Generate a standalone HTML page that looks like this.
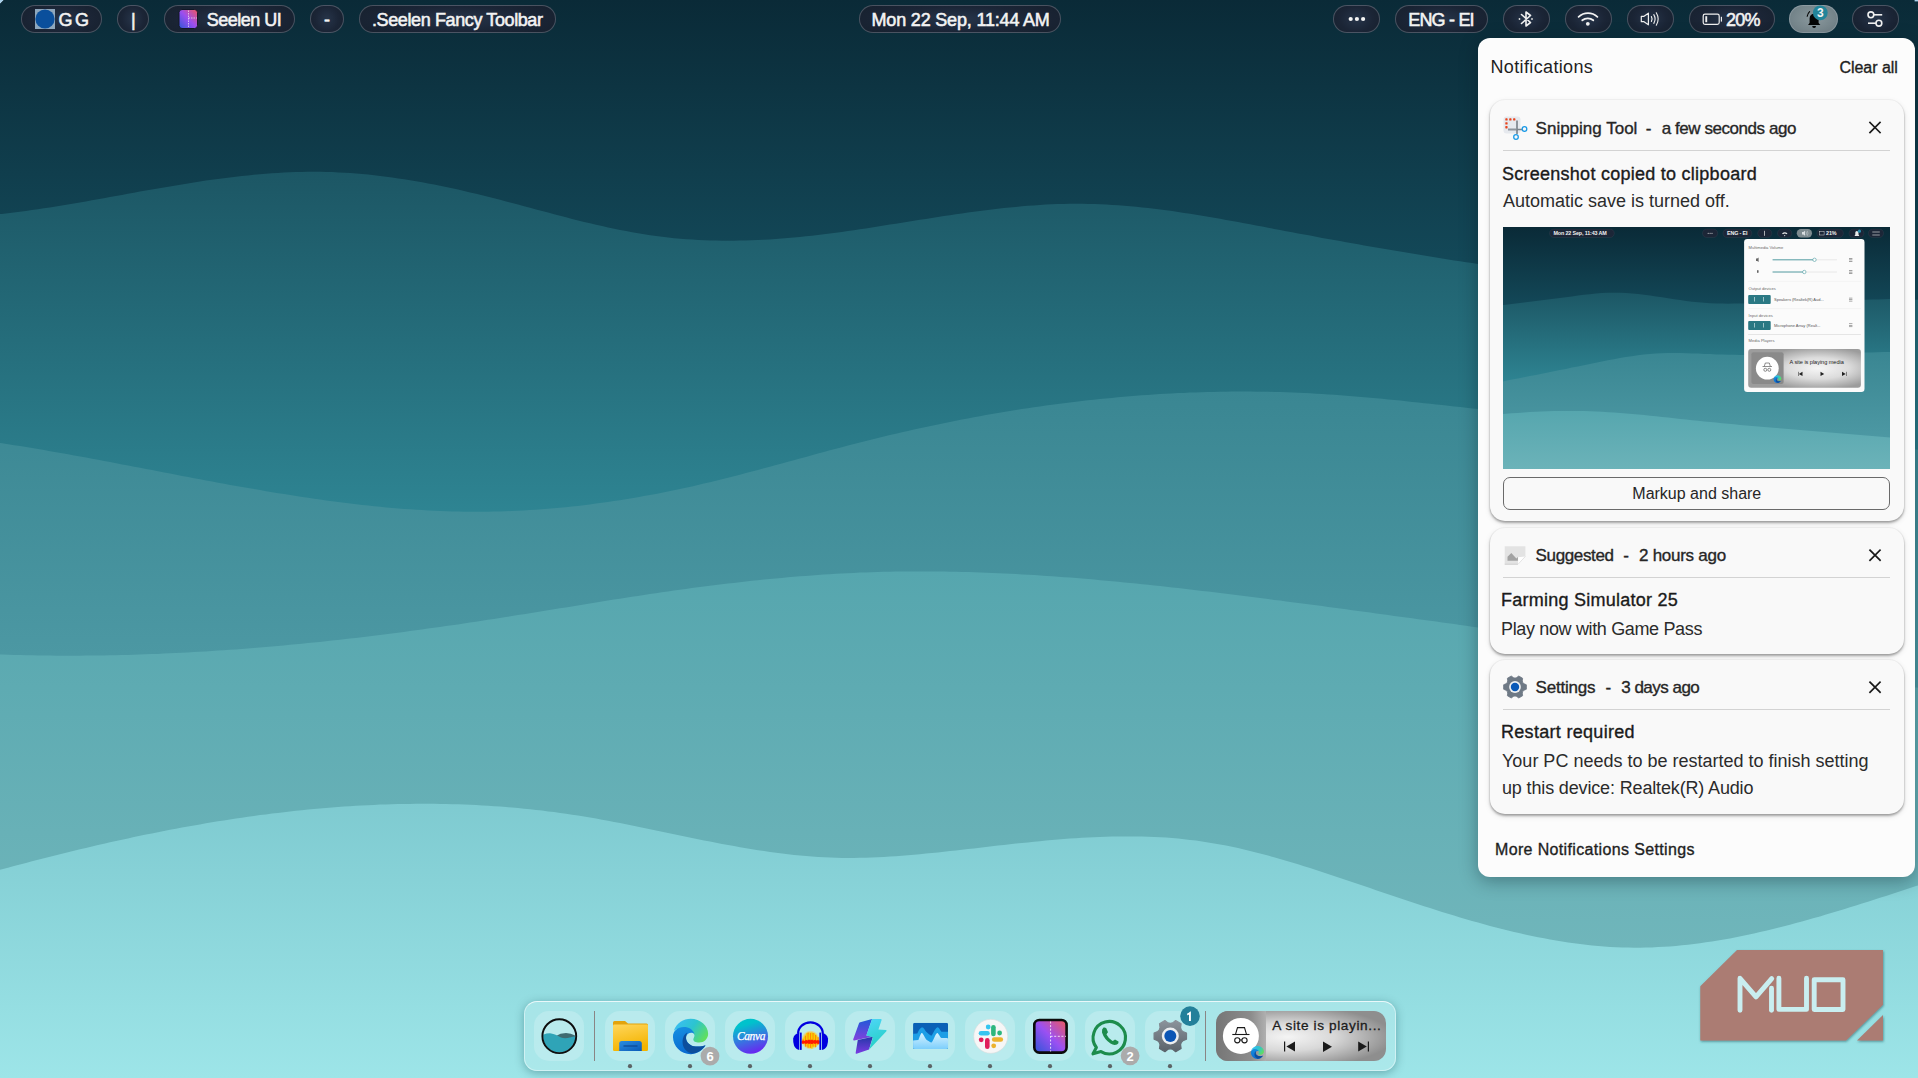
<!DOCTYPE html>
<html><head><meta charset="utf-8">
<style>
*{box-sizing:border-box;margin:0;padding:0}
html,body{width:1918px;height:1078px;overflow:hidden;background:#0b2d3b;font-family:"Liberation Sans",sans-serif}
.bg{position:absolute;left:0;top:0}
.pill{position:absolute;top:5px;height:28px;border-radius:14px;border:1px solid rgba(200,210,220,0.28);
 background:radial-gradient(ellipse 60% 80% at 50% 50%,#263449 0%,#1b2536 60%,#17212f 100%);
 color:#f2f2f2;font-weight:bold;font-size:17px;line-height:26px;text-align:center;white-space:nowrap}
.tt{position:absolute;top:6.2px;height:28px;line-height:28px;font-size:18px;color:#f3f3f3;font-weight:normal;-webkit-text-stroke:0.55px #f3f3f3;white-space:nowrap}
.bell{background:radial-gradient(ellipse 70% 90% at 50% 50%,#8a989d 0%,#738389 70%,#6a7a80 100%)!important}
.panel{position:absolute;left:1478px;top:38px;width:437px;height:838.5px;background:#fcfcfc;border-radius:12px;
 box-shadow:0 4px 18px rgba(0,20,30,0.35)}
.card{position:absolute;left:1489.5px;width:414px;background:#f9f9f9;border-radius:15px;
 box-shadow:0 0 0 1px rgba(0,0,0,0.03),0 2px 2.5px rgba(0,0,0,0.30),0 2px 6px rgba(0,0,0,0.10)}
.nt{position:absolute;line-height:1;white-space:nowrap}
.sb{-webkit-text-stroke:0.35px currentColor}
.hd{font-size:17px;color:#262626}
.tl{font-size:18px;color:#1b1b1b}
.bd{font-size:18px;color:#2b2b2b}
.sep{position:absolute;left:1503px;width:387px;height:1px;background:#d3d3d3}
.btn{position:absolute;left:1503px;top:477px;width:387px;height:33px;border:1px solid #6a6a6a;border-radius:7px;background:#f9f9f9}
.dock{position:absolute;left:524px;top:1001px;width:872px;height:70px;border-radius:13px;
 background:rgba(186,236,238,0.5);border:1px solid rgba(255,255,255,0.45);border-top-color:rgba(255,255,255,0.75);
 box-shadow:0 2px 10px rgba(0,60,70,0.35)}
.it{position:absolute;top:10px;width:50px;height:50px;border-radius:15px;background:rgba(210,245,247,0.45)}
.dot{position:absolute;top:64px;width:5px;height:5px;border-radius:50%;background:#5a6a6c}
</style></head>
<body>
<!--WAVES--><svg class="bg" width="1918" height="1078" viewBox="0 0 1918 1078">
<defs>
<linearGradient id="g1" x1="0" y1="0" x2="0" y2="260" gradientUnits="userSpaceOnUse"><stop offset="0" stop-color="#0a2a37"/><stop offset="1" stop-color="#134858"/></linearGradient>
<linearGradient id="g2" x1="0" y1="170" x2="0" y2="510" gradientUnits="userSpaceOnUse"><stop offset="0" stop-color="#1c5664"/><stop offset="1" stop-color="#2e8492"/></linearGradient>
<linearGradient id="g3" x1="0" y1="390" x2="0" y2="655" gradientUnits="userSpaceOnUse"><stop offset="0" stop-color="#3a8692"/><stop offset="1" stop-color="#4c98a3"/></linearGradient>
<linearGradient id="g4" x1="0" y1="570" x2="0" y2="950" gradientUnits="userSpaceOnUse"><stop offset="0" stop-color="#56a6ae"/><stop offset="1" stop-color="#70b6bb"/></linearGradient>
<linearGradient id="g5" x1="0" y1="800" x2="0" y2="1078" gradientUnits="userSpaceOnUse"><stop offset="0" stop-color="#7ecad0"/><stop offset="1" stop-color="#9de5e8"/></linearGradient>
</defs>
<rect x="0" y="0" width="1918" height="1078" fill="url(#g1)"/>
<path d="M-10,215.1 L-4,214.5 L2,213.9 L8,213.2 L14,212.4 L20,211.7 L26,210.9 L32,210.0 L38,209.2 L44,208.3 L50,207.4 L56,206.4 L62,205.4 L68,204.4 L74,203.4 L80,202.4 L86,201.4 L92,200.3 L98,199.2 L104,198.2 L110,197.1 L116,196.0 L122,194.9 L128,193.8 L134,192.7 L140,191.6 L146,190.6 L152,189.5 L158,188.4 L164,187.4 L170,186.4 L176,185.4 L182,184.4 L188,183.4 L194,182.5 L200,181.5 L206,180.6 L212,179.8 L218,179.0 L224,178.2 L230,177.4 L236,176.7 L242,176.0 L248,175.4 L254,174.8 L260,174.2 L266,173.7 L272,173.3 L278,172.9 L284,172.6 L290,172.3 L296,172.1 L302,171.9 L308,171.8 L314,171.8 L320,171.8 L326,172.0 L332,172.1 L338,172.4 L344,172.7 L350,173.1 L356,173.6 L362,174.1 L368,174.6 L374,175.3 L380,176.0 L386,176.7 L392,177.5 L398,178.4 L404,179.3 L410,180.3 L416,181.3 L422,182.3 L428,183.5 L434,184.6 L440,185.8 L446,187.0 L452,188.3 L458,189.6 L464,191.0 L470,192.4 L476,193.8 L482,195.3 L488,196.8 L494,198.3 L500,199.8 L506,201.4 L512,203.0 L518,204.6 L524,206.2 L530,207.8 L536,209.4 L542,211.0 L548,212.6 L554,214.2 L560,215.8 L566,217.3 L572,218.9 L578,220.4 L584,221.9 L590,223.3 L596,224.7 L602,226.1 L608,227.4 L614,228.7 L620,229.9 L626,231.1 L632,232.2 L638,233.3 L644,234.3 L650,235.2 L656,236.1 L662,236.8 L668,237.5 L674,238.2 L680,238.7 L686,239.2 L692,239.6 L698,239.9 L704,240.2 L710,240.4 L716,240.6 L722,240.7 L728,240.7 L734,240.7 L740,240.6 L746,240.5 L752,240.3 L758,240.0 L764,239.7 L770,239.4 L776,239.0 L782,238.5 L788,238.0 L794,237.5 L800,236.9 L806,236.3 L812,235.7 L818,235.0 L824,234.2 L830,233.5 L836,232.7 L842,231.9 L848,231.0 L854,230.2 L860,229.3 L866,228.4 L872,227.5 L878,226.5 L884,225.6 L890,224.6 L896,223.7 L902,222.7 L908,221.8 L914,220.8 L920,219.8 L926,218.9 L932,217.9 L938,217.0 L944,216.1 L950,215.2 L956,214.3 L962,213.4 L968,212.6 L974,211.7 L980,211.0 L986,210.2 L992,209.4 L998,208.7 L1004,208.1 L1010,207.4 L1016,206.9 L1022,206.3 L1028,205.8 L1034,205.4 L1040,205.0 L1046,204.6 L1052,204.3 L1058,204.1 L1064,203.9 L1070,203.8 L1076,203.8 L1082,203.8 L1088,203.9 L1094,204.0 L1100,204.2 L1106,204.5 L1112,204.9 L1118,205.3 L1124,205.7 L1130,206.2 L1136,206.8 L1142,207.4 L1148,208.1 L1154,208.8 L1160,209.5 L1166,210.3 L1172,211.1 L1178,212.0 L1184,212.9 L1190,213.8 L1196,214.8 L1202,215.8 L1208,216.8 L1214,217.8 L1220,218.8 L1226,219.9 L1232,221.0 L1238,222.1 L1244,223.2 L1250,224.3 L1256,225.5 L1262,226.6 L1268,227.7 L1274,228.9 L1280,230.0 L1286,231.2 L1292,232.3 L1298,233.4 L1304,234.5 L1310,235.6 L1316,236.8 L1322,237.9 L1328,239.0 L1334,240.0 L1340,241.1 L1346,242.2 L1352,243.3 L1358,244.3 L1364,245.4 L1370,246.4 L1376,247.5 L1382,248.5 L1388,249.5 L1394,250.6 L1400,251.6 L1406,252.6 L1412,253.6 L1418,254.6 L1424,255.6 L1430,256.5 L1436,257.5 L1442,258.5 L1448,259.4 L1454,260.4 L1460,261.3 L1466,262.2 L1472,263.1 L1478,264.1 L1484,265.0 L1490,265.9 L1496,266.7 L1502,267.6 L1508,268.5 L1514,269.3 L1520,270.2 L1526,271.0 L1532,271.8 L1538,272.7 L1544,273.5 L1550,274.3 L1556,275.0 L1562,275.8 L1568,276.6 L1574,277.3 L1580,278.1 L1586,278.8 L1592,279.6 L1598,280.3 L1604,281.0 L1610,281.7 L1616,282.3 L1622,283.0 L1628,283.7 L1634,284.3 L1640,284.9 L1646,285.6 L1652,286.2 L1658,286.8 L1664,287.4 L1670,287.9 L1676,288.5 L1682,289.1 L1688,289.6 L1694,290.1 L1700,290.6 L1706,291.1 L1712,291.6 L1718,292.1 L1724,292.6 L1730,293.0 L1736,293.5 L1742,293.9 L1748,294.3 L1754,294.7 L1760,295.1 L1766,295.4 L1772,295.8 L1778,296.1 L1784,296.4 L1790,296.8 L1796,297.1 L1802,297.3 L1808,297.6 L1814,297.9 L1820,298.1 L1826,298.3 L1832,298.5 L1838,298.7 L1844,298.9 L1850,299.1 L1856,299.2 L1862,299.4 L1868,299.5 L1874,299.6 L1880,299.7 L1886,299.7 L1892,299.8 L1898,299.8 L1904,299.8 L1910,299.8 L1916,299.8 L1922,299.8 L1928,299.8 L1930,1100 L-10,1100 Z" fill="url(#g2)"/>
<path d="M-10,441.5 L-4,442.4 L2,443.3 L8,444.2 L14,445.2 L20,446.1 L26,447.1 L32,448.1 L38,449.1 L44,450.1 L50,451.2 L56,452.2 L62,453.3 L68,454.3 L74,455.4 L80,456.5 L86,457.6 L92,458.7 L98,459.8 L104,461.0 L110,462.1 L116,463.2 L122,464.4 L128,465.5 L134,466.7 L140,467.8 L146,469.0 L152,470.1 L158,471.3 L164,472.4 L170,473.6 L176,474.7 L182,475.9 L188,477.0 L194,478.2 L200,479.3 L206,480.4 L212,481.5 L218,482.7 L224,483.8 L230,484.9 L236,485.9 L242,487.0 L248,488.1 L254,489.1 L260,490.1 L266,491.2 L272,492.2 L278,493.2 L284,494.1 L290,495.1 L296,496.0 L302,496.9 L308,497.8 L314,498.7 L320,499.6 L326,500.4 L332,501.2 L338,502.0 L344,502.8 L350,503.5 L356,504.2 L362,504.9 L368,505.6 L374,506.2 L380,506.8 L386,507.4 L392,507.9 L398,508.4 L404,508.9 L410,509.3 L416,509.7 L422,510.1 L428,510.4 L434,510.7 L440,511.0 L446,511.2 L452,511.4 L458,511.6 L464,511.7 L470,511.7 L476,511.8 L482,511.8 L488,511.7 L494,511.6 L500,511.4 L506,511.3 L512,511.0 L518,510.8 L524,510.4 L530,510.1 L536,509.7 L542,509.3 L548,508.8 L554,508.3 L560,507.7 L566,507.2 L572,506.5 L578,505.9 L584,505.2 L590,504.4 L596,503.6 L602,502.8 L608,502.0 L614,501.1 L620,500.2 L626,499.2 L632,498.2 L638,497.2 L644,496.1 L650,495.0 L656,493.9 L662,492.7 L668,491.5 L674,490.3 L680,489.0 L686,487.7 L692,486.4 L698,485.0 L704,483.6 L710,482.2 L716,480.8 L722,479.3 L728,477.8 L734,476.2 L740,474.7 L746,473.1 L752,471.5 L758,469.9 L764,468.3 L770,466.7 L776,465.1 L782,463.4 L788,461.8 L794,460.2 L800,458.5 L806,456.9 L812,455.2 L818,453.6 L824,452.0 L830,450.3 L836,448.7 L842,447.2 L848,445.6 L854,444.0 L860,442.5 L866,441.0 L872,439.5 L878,438.0 L884,436.5 L890,435.1 L896,433.7 L902,432.3 L908,430.9 L914,429.6 L920,428.3 L926,427.0 L932,425.7 L938,424.4 L944,423.2 L950,422.0 L956,420.8 L962,419.6 L968,418.5 L974,417.3 L980,416.2 L986,415.1 L992,414.1 L998,413.0 L1004,412.0 L1010,411.0 L1016,410.1 L1022,409.1 L1028,408.2 L1034,407.3 L1040,406.4 L1046,405.6 L1052,404.8 L1058,404.0 L1064,403.2 L1070,402.4 L1076,401.7 L1082,401.0 L1088,400.3 L1094,399.7 L1100,399.0 L1106,398.4 L1112,397.9 L1118,397.3 L1124,396.8 L1130,396.3 L1136,395.8 L1142,395.3 L1148,394.9 L1154,394.5 L1160,394.1 L1166,393.8 L1172,393.4 L1178,393.1 L1184,392.9 L1190,392.6 L1196,392.4 L1202,392.2 L1208,392.0 L1214,391.9 L1220,391.8 L1226,391.7 L1232,391.6 L1238,391.6 L1244,391.6 L1250,391.6 L1256,391.7 L1262,391.7 L1268,391.8 L1274,392.0 L1280,392.1 L1286,392.3 L1292,392.5 L1298,392.8 L1304,393.0 L1310,393.3 L1316,393.7 L1322,394.0 L1328,394.4 L1334,394.8 L1340,395.2 L1346,395.7 L1352,396.2 L1358,396.7 L1364,397.2 L1370,397.7 L1376,398.3 L1382,398.8 L1388,399.4 L1394,400.0 L1400,400.6 L1406,401.2 L1412,401.9 L1418,402.5 L1424,403.2 L1430,403.8 L1436,404.5 L1442,405.1 L1448,405.8 L1454,406.5 L1460,407.1 L1466,407.8 L1472,408.5 L1478,409.1 L1484,409.8 L1490,410.4 L1496,411.1 L1502,411.7 L1508,412.4 L1514,413.0 L1520,413.6 L1526,414.3 L1532,414.9 L1538,415.5 L1544,416.2 L1550,416.8 L1556,417.4 L1562,418.0 L1568,418.6 L1574,419.2 L1580,419.8 L1586,420.4 L1592,421.0 L1598,421.6 L1604,422.2 L1610,422.8 L1616,423.3 L1622,423.9 L1628,424.5 L1634,425.1 L1640,425.6 L1646,426.2 L1652,426.8 L1658,427.3 L1664,427.9 L1670,428.4 L1676,429.0 L1682,429.6 L1688,430.1 L1694,430.6 L1700,431.2 L1706,431.7 L1712,432.3 L1718,432.8 L1724,433.3 L1730,433.9 L1736,434.4 L1742,434.9 L1748,435.5 L1754,436.0 L1760,436.5 L1766,437.0 L1772,437.6 L1778,438.1 L1784,438.6 L1790,439.1 L1796,439.6 L1802,440.1 L1808,440.6 L1814,441.1 L1820,441.6 L1826,442.2 L1832,442.7 L1838,443.2 L1844,443.7 L1850,444.2 L1856,444.7 L1862,445.2 L1868,445.6 L1874,446.1 L1880,446.6 L1886,447.1 L1892,447.6 L1898,448.1 L1904,448.6 L1910,449.1 L1916,449.6 L1922,450.1 L1928,450.6 L1930,1100 L-10,1100 Z" fill="url(#g3)"/>
<path d="M-10,654.1 L-4,654.3 L2,654.5 L8,654.7 L14,654.9 L20,655.1 L26,655.2 L32,655.3 L38,655.4 L44,655.5 L50,655.6 L56,655.7 L62,655.7 L68,655.7 L74,655.7 L80,655.7 L86,655.6 L92,655.6 L98,655.5 L104,655.4 L110,655.3 L116,655.2 L122,655.1 L128,654.9 L134,654.7 L140,654.5 L146,654.3 L152,654.1 L158,653.9 L164,653.6 L170,653.3 L176,653.1 L182,652.8 L188,652.4 L194,652.1 L200,651.8 L206,651.4 L212,651.0 L218,650.6 L224,650.2 L230,649.8 L236,649.4 L242,648.9 L248,648.5 L254,648.0 L260,647.5 L266,647.0 L272,646.5 L278,645.9 L284,645.4 L290,644.8 L296,644.3 L302,643.7 L308,643.1 L314,642.5 L320,641.9 L326,641.2 L332,640.6 L338,639.9 L344,639.2 L350,638.6 L356,637.9 L362,637.2 L368,636.4 L374,635.7 L380,635.0 L386,634.2 L392,633.4 L398,632.7 L404,631.9 L410,631.1 L416,630.3 L422,629.5 L428,628.6 L434,627.8 L440,627.0 L446,626.1 L452,625.2 L458,624.4 L464,623.5 L470,622.6 L476,621.7 L482,620.8 L488,619.8 L494,618.9 L500,618.0 L506,617.0 L512,616.1 L518,615.1 L524,614.2 L530,613.2 L536,612.2 L542,611.3 L548,610.3 L554,609.3 L560,608.3 L566,607.4 L572,606.4 L578,605.4 L584,604.4 L590,603.5 L596,602.5 L602,601.6 L608,600.6 L614,599.6 L620,598.7 L626,597.8 L632,596.8 L638,595.9 L644,595.0 L650,594.1 L656,593.2 L662,592.3 L668,591.5 L674,590.6 L680,589.8 L686,588.9 L692,588.1 L698,587.3 L704,586.5 L710,585.8 L716,585.0 L722,584.3 L728,583.6 L734,582.9 L740,582.2 L746,581.5 L752,580.8 L758,580.2 L764,579.6 L770,579.0 L776,578.4 L782,577.9 L788,577.3 L794,576.8 L800,576.3 L806,575.9 L812,575.4 L818,575.0 L824,574.6 L830,574.2 L836,573.8 L842,573.5 L848,573.2 L854,572.9 L860,572.6 L866,572.4 L872,572.2 L878,572.0 L884,571.8 L890,571.7 L896,571.6 L902,571.5 L908,571.5 L914,571.4 L920,571.4 L926,571.4 L932,571.4 L938,571.5 L944,571.6 L950,571.7 L956,571.8 L962,571.9 L968,572.1 L974,572.3 L980,572.5 L986,572.7 L992,572.9 L998,573.2 L1004,573.5 L1010,573.8 L1016,574.1 L1022,574.4 L1028,574.8 L1034,575.1 L1040,575.5 L1046,575.9 L1052,576.3 L1058,576.7 L1064,577.2 L1070,577.6 L1076,578.1 L1082,578.6 L1088,579.1 L1094,579.6 L1100,580.2 L1106,580.7 L1112,581.3 L1118,581.8 L1124,582.4 L1130,583.0 L1136,583.6 L1142,584.2 L1148,584.8 L1154,585.5 L1160,586.1 L1166,586.8 L1172,587.4 L1178,588.1 L1184,588.8 L1190,589.5 L1196,590.2 L1202,590.9 L1208,591.6 L1214,592.3 L1220,593.1 L1226,593.8 L1232,594.5 L1238,595.3 L1244,596.0 L1250,596.8 L1256,597.5 L1262,598.3 L1268,599.1 L1274,599.9 L1280,600.6 L1286,601.4 L1292,602.2 L1298,603.0 L1304,603.8 L1310,604.6 L1316,605.3 L1322,606.1 L1328,606.9 L1334,607.7 L1340,608.5 L1346,609.3 L1352,610.2 L1358,611.0 L1364,611.8 L1370,612.6 L1376,613.4 L1382,614.2 L1388,615.0 L1394,615.9 L1400,616.7 L1406,617.5 L1412,618.3 L1418,619.2 L1424,620.0 L1430,620.8 L1436,621.6 L1442,622.5 L1448,623.3 L1454,624.1 L1460,625.0 L1466,625.8 L1472,626.7 L1478,627.5 L1484,628.3 L1490,629.2 L1496,630.0 L1502,630.9 L1508,631.7 L1514,632.5 L1520,633.4 L1526,634.2 L1532,635.1 L1538,635.9 L1544,636.8 L1550,637.6 L1556,638.5 L1562,639.3 L1568,640.2 L1574,641.0 L1580,641.9 L1586,642.7 L1592,643.6 L1598,644.4 L1604,645.2 L1610,646.1 L1616,646.9 L1622,647.8 L1628,648.6 L1634,649.5 L1640,650.3 L1646,651.2 L1652,652.0 L1658,652.8 L1664,653.7 L1670,654.5 L1676,655.4 L1682,656.2 L1688,657.0 L1694,657.9 L1700,658.7 L1706,659.5 L1712,660.4 L1718,661.2 L1724,662.0 L1730,662.9 L1736,663.7 L1742,664.5 L1748,665.3 L1754,666.2 L1760,667.0 L1766,667.8 L1772,668.6 L1778,669.4 L1784,670.2 L1790,671.1 L1796,671.9 L1802,672.7 L1808,673.5 L1814,674.3 L1820,675.1 L1826,675.9 L1832,676.7 L1838,677.5 L1844,678.2 L1850,679.0 L1856,679.8 L1862,680.6 L1868,681.4 L1874,682.2 L1880,682.9 L1886,683.7 L1892,684.5 L1898,685.2 L1904,686.0 L1910,686.8 L1916,687.5 L1922,688.3 L1928,689.0 L1930,1100 L-10,1100 Z" fill="url(#g4)"/>
<path d="M-10,872.6 L-4,870.9 L2,869.3 L8,867.7 L14,866.1 L20,864.5 L26,862.9 L32,861.3 L38,859.8 L44,858.2 L50,856.7 L56,855.2 L62,853.7 L68,852.2 L74,850.7 L80,849.3 L86,847.9 L92,846.5 L98,845.1 L104,843.7 L110,842.3 L116,841.0 L122,839.7 L128,838.4 L134,837.1 L140,835.8 L146,834.6 L152,833.4 L158,832.2 L164,831.0 L170,829.8 L176,828.7 L182,827.6 L188,826.5 L194,825.4 L200,824.4 L206,823.3 L212,822.3 L218,821.3 L224,820.4 L230,819.4 L236,818.5 L242,817.7 L248,816.8 L254,816.0 L260,815.1 L266,814.4 L272,813.6 L278,812.9 L284,812.2 L290,811.5 L296,810.8 L302,810.2 L308,809.6 L314,809.0 L320,808.5 L326,808.0 L332,807.5 L338,807.0 L344,806.6 L350,806.2 L356,805.8 L362,805.5 L368,805.2 L374,804.9 L380,804.6 L386,804.4 L392,804.2 L398,804.1 L404,804.0 L410,803.9 L416,803.8 L422,803.8 L428,803.8 L434,803.8 L440,803.9 L446,804.0 L452,804.2 L458,804.3 L464,804.6 L470,804.8 L476,805.1 L482,805.4 L488,805.8 L494,806.2 L500,806.6 L506,807.1 L512,807.6 L518,808.1 L524,808.7 L530,809.3 L536,809.9 L542,810.6 L548,811.4 L554,812.1 L560,812.9 L566,813.8 L572,814.7 L578,815.6 L584,816.6 L590,817.6 L596,818.6 L602,819.7 L608,820.8 L614,822.0 L620,823.1 L626,824.3 L632,825.5 L638,826.7 L644,828.0 L650,829.2 L656,830.4 L662,831.7 L668,833.0 L674,834.2 L680,835.5 L686,836.7 L692,838.0 L698,839.2 L704,840.4 L710,841.6 L716,842.8 L722,843.9 L728,845.0 L734,846.1 L740,847.2 L746,848.2 L752,849.2 L758,850.2 L764,851.1 L770,852.0 L776,852.8 L782,853.6 L788,854.3 L794,855.0 L800,855.6 L806,856.1 L812,856.6 L818,857.0 L824,857.3 L830,857.6 L836,857.8 L842,857.9 L848,857.9 L854,857.9 L860,857.8 L866,857.7 L872,857.5 L878,857.2 L884,856.9 L890,856.6 L896,856.2 L902,855.7 L908,855.2 L914,854.7 L920,854.2 L926,853.6 L932,853.0 L938,852.4 L944,851.8 L950,851.1 L956,850.4 L962,849.8 L968,849.1 L974,848.4 L980,847.7 L986,847.0 L992,846.3 L998,845.6 L1004,844.9 L1010,844.3 L1016,843.6 L1022,843.0 L1028,842.4 L1034,841.7 L1040,841.2 L1046,840.6 L1052,840.1 L1058,839.5 L1064,839.1 L1070,838.6 L1076,838.2 L1082,837.8 L1088,837.5 L1094,837.2 L1100,836.9 L1106,836.7 L1112,836.5 L1118,836.4 L1124,836.4 L1130,836.4 L1136,836.4 L1142,836.5 L1148,836.7 L1154,836.9 L1160,837.3 L1166,837.6 L1172,838.1 L1178,838.6 L1184,839.2 L1190,839.9 L1196,840.6 L1202,841.4 L1208,842.4 L1214,843.4 L1220,844.4 L1226,845.6 L1232,846.8 L1238,848.1 L1244,849.5 L1250,850.9 L1256,852.4 L1262,854.0 L1268,855.6 L1274,857.2 L1280,859.0 L1286,860.7 L1292,862.5 L1298,864.3 L1304,866.2 L1310,868.1 L1316,870.0 L1322,872.0 L1328,874.0 L1334,875.9 L1340,878.0 L1346,880.0 L1352,882.0 L1358,884.1 L1364,886.1 L1370,888.1 L1376,890.2 L1382,892.2 L1388,894.3 L1394,896.3 L1400,898.3 L1406,900.3 L1412,902.3 L1418,904.2 L1424,906.2 L1430,908.1 L1436,910.0 L1442,911.9 L1448,913.8 L1454,915.6 L1460,917.4 L1466,919.2 L1472,920.9 L1478,922.6 L1484,924.3 L1490,925.9 L1496,927.5 L1502,929.0 L1508,930.5 L1514,931.9 L1520,933.3 L1526,934.7 L1532,935.9 L1538,937.2 L1544,938.3 L1550,939.5 L1556,940.5 L1562,941.5 L1568,942.4 L1574,943.3 L1580,944.1 L1586,944.8 L1592,945.4 L1598,946.0 L1604,946.5 L1610,946.9 L1616,947.2 L1622,947.4 L1628,947.6 L1634,947.7 L1640,947.7 L1646,947.6 L1652,947.4 L1658,947.1 L1664,946.8 L1670,946.4 L1676,945.9 L1682,945.3 L1688,944.7 L1694,944.0 L1700,943.2 L1706,942.3 L1712,941.4 L1718,940.5 L1724,939.5 L1730,938.4 L1736,937.2 L1742,936.0 L1748,934.8 L1754,933.5 L1760,932.1 L1766,930.7 L1772,929.3 L1778,927.8 L1784,926.3 L1790,924.7 L1796,923.1 L1802,921.5 L1808,919.8 L1814,918.1 L1820,916.4 L1826,914.6 L1832,912.8 L1838,911.0 L1844,909.2 L1850,907.3 L1856,905.5 L1862,903.6 L1868,901.7 L1874,899.8 L1880,897.8 L1886,895.9 L1892,893.9 L1898,892.0 L1904,890.0 L1910,888.1 L1916,886.1 L1922,884.1 L1928,882.2 L1930,1100 L-10,1100 Z" fill="url(#g5)"/>
</svg><!--/WAVES-->

<svg style="position:absolute;left:0;top:0" width="6" height="6"><path d="M0,0 L4.2,0 L0,4.2 Z" fill="#a9d0ea"/><path d="M4.2,0 L0,4.2" stroke="#02141c" stroke-width="0.8"/></svg>
<svg style="position:absolute;left:1914px;top:0" width="4" height="3"><rect x="0.6" y="0" width="3.4" height="1.4" fill="#a9d0ea"/></svg>
<!-- top bar -->
<div class="pill" style="left:21px;width:81px"></div>
<div class="pill" style="left:117px;width:32px"></div>
<div class="pill" style="left:164px;width:131px"></div>
<div class="pill" style="left:310px;width:34px"></div>
<div class="pill" style="left:359px;width:197px"></div>
<div class="pill" style="left:859px;width:202px"></div>
<div class="pill" style="left:1333px;width:47px"></div>
<div class="pill" style="left:1395px;width:93px"></div>
<div class="pill" style="left:1503px;width:47px"></div>
<div class="pill" style="left:1565px;width:47px"></div>
<div class="pill" style="left:1627px;width:47px"></div>
<div class="pill" style="left:1689px;width:86px"></div>
<div class="pill bell" style="left:1789px;width:49px"></div>
<div class="pill" style="left:1852px;width:47px"></div>
<div class="tt" style="left:58.5px;letter-spacing:-1.2px">G G</div>
<div class="tt" style="left:131px;font-size:18px;font-weight:normal">|</div>
<div class="tt" style="left:206.8px;letter-spacing:-0.5px">Seelen UI</div>
<div class="tt" style="left:324px">-</div>
<div class="tt" style="left:372px;letter-spacing:-0.39px">.Seelen Fancy Toolbar</div>
<div class="tt" style="left:871.5px;letter-spacing:-0.18px">Mon 22 Sep, 11:44 AM</div>
<div class="tt" style="left:1408.2px;letter-spacing:-0.8px">ENG - EI</div>
<div class="tt" style="left:1726px;letter-spacing:-0.75px">20%</div>
<svg style="position:absolute;left:0;top:0" width="1918" height="40">
 <!-- G G icon -->
 <rect x="35" y="9" width="20" height="20" fill="#8ea7bd"/>
 <circle cx="45" cy="19" r="9.6" fill="#0a4f9c"/>
 <!-- seelen icon -->
 <defs>
  <linearGradient id="sg" x1="0" y1="1" x2="1" y2="0"><stop offset="0" stop-color="#2f56d6"/><stop offset="0.5" stop-color="#9b4ff0"/><stop offset="1" stop-color="#f0555d"/></linearGradient>
  <linearGradient id="sg2" x1="0" y1="1" x2="1" y2="0"><stop offset="0" stop-color="#3a4fd8"/><stop offset="0.45" stop-color="#9a4ff2"/><stop offset="1" stop-color="#f25a5a"/></linearGradient>
 </defs>
 <rect x="179" y="9.5" width="18.5" height="19" rx="3" fill="url(#sg)" stroke="#121826" stroke-width="1"/>
 <line x1="188.5" y1="10.5" x2="188.5" y2="28" stroke="#fff" stroke-opacity="0.75" stroke-width="0.8" stroke-dasharray="1.5 1"/>
 <line x1="188.5" y1="18" x2="197" y2="18" stroke="#fff" stroke-opacity="0.75" stroke-width="0.8" stroke-dasharray="1.5 1"/>
 <!-- dots -->
 <circle cx="1350.7" cy="19" r="2.1" fill="#f4f4f4"/><circle cx="1356.9" cy="19" r="2.1" fill="#f4f4f4"/><circle cx="1363.1" cy="19" r="2.1" fill="#f4f4f4"/>
 <!-- bluetooth -->
 <path d="M1521.5,14.5 L1530.5,22.5 L1526,26 L1526,12 L1530.5,15.5 L1521.5,23.5" fill="none" stroke="#f0f0f0" stroke-width="1.6" stroke-linejoin="round" stroke-linecap="round"/>
 <circle cx="1519.5" cy="19" r="0.9" fill="#e0e0e0"/><circle cx="1532" cy="19" r="0.9" fill="#e0e0e0"/>
 <!-- wifi -->
 <path d="M1578.6,16.8 A14,14 0 0 1 1597.4,16.8" fill="none" stroke="#f2f2f2" stroke-width="1.8" stroke-linecap="round"/>
 <path d="M1582.3,20.3 A8.5,8.5 0 0 1 1593.3,20.3" fill="none" stroke="#f2f2f2" stroke-width="1.8" stroke-linecap="round"/>
 <circle cx="1587.8" cy="23.8" r="1.9" fill="#f2f2f2"/>
 <!-- volume -->
 <path d="M1641.3,16.3 L1644,16.3 L1648.4,13.2 L1648.4,24.8 L1644,21.7 L1641.3,21.7 Z" fill="none" stroke="#eeeeee" stroke-width="1.2" stroke-linejoin="round"/>
 <path d="M1651.4,16.6 Q1652.8,19 1651.4,21.4" fill="none" stroke="#eeeeee" stroke-width="1.1" stroke-linecap="round"/>
 <path d="M1653.8,14.6 Q1656.4,19 1653.8,23.4" fill="none" stroke="#eeeeee" stroke-width="1.1" stroke-linecap="round"/>
 <path d="M1656.3,12.8 Q1660,19 1656.3,25.2" fill="none" stroke="#eeeeee" stroke-width="1.1" stroke-linecap="round"/>
 <!-- battery -->
 <rect x="1703.2" y="14.1" width="16" height="10.2" rx="1.8" fill="none" stroke="#eeeeee" stroke-width="1.2"/>
 <rect x="1705.3" y="16.2" width="1.9" height="6" fill="#eeeeee"/>
 <rect x="1720.8" y="16.8" width="1.2" height="4.8" fill="#eeeeee"/>
 <!-- bell -->
 <path d="M1808,25 L1809.6,23 L1809.6,18.5 A4.5,4.8 0 0 1 1818.6,18.5 L1818.6,23 L1820.4,25 Z" fill="#050505"/>
 <path d="M1812.2,26 L1816,26 A1.9,1.9 0 0 1 1812.2,26 Z" fill="#050505"/>
 <path d="M1807.2,16.3 Q1807.6,13.4 1809.6,11.6" fill="none" stroke="#050505" stroke-width="1.1" stroke-linecap="round"/>
 <circle cx="1820.3" cy="12.8" r="7.4" fill="#23859a"/>
 <text x="1820.4" y="17.4" font-family="Liberation Sans" font-size="12" font-weight="bold" fill="#f4f4f4" text-anchor="middle">3</text>
 <!-- sliders -->
 <circle cx="1870.9" cy="14.8" r="2.9" fill="none" stroke="#f0f0f0" stroke-width="1.6"/>
 <line x1="1873.8" y1="14.8" x2="1882.2" y2="14.8" stroke="#f0f0f0" stroke-width="1.6"/>
 <circle cx="1878.9" cy="23.2" r="2.9" fill="none" stroke="#f0f0f0" stroke-width="1.6"/>
 <line x1="1868" y1="23.2" x2="1876" y2="23.2" stroke="#f0f0f0" stroke-width="1.6"/>
</svg>

<!-- notification panel -->
<div class="panel"></div>
<div class="card" style="top:99.5px;height:421.5px"></div>
<div class="card" style="top:527.5px;height:126.5px"></div>
<div class="card" style="top:659.5px;height:154.5px"></div>
<div class="nt" style="left:1490.5px;top:57.6px;font-size:18px;letter-spacing:0.36px;color:#1f1f1f">Notifications</div>
<div class="nt sb" style="left:1839.5px;top:60.4px;font-size:16px;letter-spacing:-0.05px;color:#1f1f1f">Clear all</div>

<div class="nt sb hd" style="left:1535.6px;top:119.7px">Snipping Tool</div>
<div class="nt sb hd" style="left:1645.8px;top:119.7px">-</div>
<div class="nt sb hd" style="left:1661.8px;top:119.7px;letter-spacing:-0.45px">a few seconds ago</div>
<div class="sep" style="top:150px"></div>
<div class="nt sb tl" style="left:1502px;top:164.6px;letter-spacing:0.26px">Screenshot copied to clipboard</div>
<div class="nt bd" style="left:1503px;top:192.4px">Automatic save is turned off.</div>
<div class="btn"></div>
<div class="nt" style="left:1632.3px;top:486.2px;font-size:16px;color:#262626">Markup and share</div>

<div class="nt sb hd" style="left:1535.6px;top:546.5px;letter-spacing:-0.37px">Suggested</div>
<div class="nt sb hd" style="left:1623.2px;top:546.5px">-</div>
<div class="nt sb hd" style="left:1639px;top:546.5px;letter-spacing:-0.27px">2 hours ago</div>
<div class="sep" style="top:577px"></div>
<div class="nt sb tl" style="left:1501px;top:591.3px;letter-spacing:0.25px">Farming Simulator 25</div>
<div class="nt bd" style="left:1501px;top:619.8px;letter-spacing:-0.35px">Play now with Game Pass</div>

<div class="nt sb hd" style="left:1535.6px;top:679.0px;letter-spacing:-0.23px">Settings</div>
<div class="nt sb hd" style="left:1605.6px;top:679.0px">-</div>
<div class="nt sb hd" style="left:1621.3px;top:679.0px;letter-spacing:-0.52px">3 days ago</div>
<div class="sep" style="top:709px"></div>
<div class="nt sb tl" style="left:1501px;top:723.3px;letter-spacing:0.3px">Restart required</div>
<div class="nt bd" style="left:1502px;top:751.8px">Your PC needs to be restarted to finish setting</div>
<div class="nt bd" style="left:1502px;top:779.4px;letter-spacing:-0.15px">up this device: Realtek(R) Audio</div>

<div class="nt sb" style="left:1495px;top:841.5px;font-size:16px;letter-spacing:0.35px;color:#1f1f1f">More Notifications Settings</div>

<svg style="position:absolute;left:0;top:0" width="1918" height="900">
 <!-- close X -->
 <g stroke="#1a1a1a" stroke-width="1.7" stroke-linecap="square">
  <path d="M1870,122.5 L1880,132.5 M1880,122.5 L1870,132.5"/>
  <path d="M1870,550.2 L1880,560.2 M1880,550.2 L1870,560.2"/>
  <path d="M1870,682.2 L1880,692.2 M1880,682.2 L1870,692.2"/>
 </g>
 <!-- snipping tool icon -->
 <rect x="1503.5" y="116.5" width="17" height="17" rx="3" fill="#e6e9ee"/>
 <g fill="#e8431c"><rect x="1505.3" y="118.3" width="2.3" height="2.3" rx="0.6"/><rect x="1509.2" y="118.3" width="2.3" height="2.3" rx="0.6"/><rect x="1513.1" y="118.3" width="2.3" height="2.3" rx="0.6"/><rect x="1505.3" y="122.2" width="2.3" height="2.3" rx="0.6"/><rect x="1505.3" y="126.1" width="2.3" height="2.3" rx="0.6"/></g>
 <path d="M1508,129.5 L1517,129.5 L1517,120.5" fill="none" stroke="#8d949c" stroke-width="2"/>
 <path d="M1517,129.5 L1522,129.5 M1517,129.5 L1517,134" stroke="#7b838b" stroke-width="1.6"/>
 <circle cx="1524.5" cy="129" r="2.3" fill="none" stroke="#1c9ae6" stroke-width="1.3"/>
 <circle cx="1516" cy="137" r="2.3" fill="none" stroke="#1c9ae6" stroke-width="1.3"/>
 <!-- suggested icon -->
 <path d="M1504.7,546.3 L1525.4,546.3 L1525.4,556.4 L1517.8,564.5 L1504.7,564.5 Z" fill="#e3e3e3"/>
 <path d="M1504.7,563.8 L1517.9,563.8 L1517.9,564.6 L1504.7,564.6 Z" fill="#c9c9c9"/>
 <path d="M1507.5,560.8 L1507.5,556.7 L1511.3,553 L1516.4,558.4 L1517.9,557 L1517.9,560.8 Z" fill="#a2a2a2"/>
 <path d="M1518.1,557.2 L1525.2,556.6 L1518.1,564.2 Z" fill="#ffffff"/>
 <path d="M1525.2,556.6 L1518.1,564.2" stroke="#d6d6d6" stroke-width="0.6"/>
<!-- settings gear icon -->
 <path d="M1524.02,683.72 L1526.39,684.79 L1526.39,689.21 L1524.02,690.28 Q1522.27,691.20 1522.35,693.17 L1522.61,695.75 L1518.78,697.97 L1516.67,696.45 Q1515.00,695.40 1513.33,696.45 L1511.22,697.97 L1507.39,695.75 L1507.65,693.17 Q1507.73,691.20 1505.98,690.28 L1503.61,689.21 L1503.61,684.79 L1505.98,683.72 Q1507.73,682.80 1507.65,680.83 L1507.39,678.25 L1511.22,676.03 L1513.33,677.55 Q1515.00,678.60 1516.67,677.55 L1518.78,676.03 L1522.61,678.25 L1522.35,680.83 Q1522.27,682.80 1524.02,683.72 Z" fill="#6e7985" stroke="#6e7985" stroke-width="0.8" stroke-linejoin="round"/>
 <circle cx="1515" cy="687" r="5.9" fill="#eef0f2"/>
 <circle cx="1515" cy="687" r="4.2" fill="#0b5ab8"/>
</svg>

<!-- thumbnail -->
<svg style="position:absolute;left:1503px;top:227px" width="387" height="242" viewBox="1503 227 387 242">
<!--TWAVES--><defs>
<linearGradient id="t1" x1="0" y1="227" x2="0" y2="305" gradientUnits="userSpaceOnUse"><stop offset="0" stop-color="#0a2a37"/><stop offset="1" stop-color="#134858"/></linearGradient>
<linearGradient id="t2" x1="0" y1="292" x2="0" y2="381" gradientUnits="userSpaceOnUse"><stop offset="0" stop-color="#1c5664"/><stop offset="1" stop-color="#2e8492"/></linearGradient>
<linearGradient id="t3" x1="0" y1="352" x2="0" y2="437" gradientUnits="userSpaceOnUse"><stop offset="0" stop-color="#3a8692"/><stop offset="1" stop-color="#4c98a3"/></linearGradient>
<linearGradient id="t4" x1="0" y1="410" x2="0" y2="470" gradientUnits="userSpaceOnUse"><stop offset="0" stop-color="#56a6ae"/><stop offset="1" stop-color="#6cb3b9"/></linearGradient>
</defs>
<rect x="1503" y="227" width="387" height="242" fill="url(#t1)"/>
<path d="M1500,305.3 L1506,304.7 L1512,303.9 L1518,303.2 L1524,302.5 L1530,301.8 L1536,301.1 L1542,300.3 L1548,299.6 L1554,298.8 L1560,298.0 L1566,297.2 L1572,296.4 L1578,295.6 L1584,294.8 L1590,294.2 L1596,293.6 L1602,293.1 L1608,292.8 L1614,292.7 L1620,292.7 L1626,293.0 L1632,293.4 L1638,294.0 L1644,294.7 L1650,295.5 L1656,296.4 L1662,297.3 L1668,298.2 L1674,299.2 L1680,300.1 L1686,300.9 L1692,301.7 L1698,302.3 L1704,302.8 L1710,303.2 L1716,303.5 L1722,303.6 L1728,303.7 L1734,303.6 L1740,303.5 L1746,303.4 L1752,303.2 L1758,303.1 L1764,302.9 L1770,302.7 L1776,302.5 L1782,302.3 L1788,302.1 L1794,301.9 L1800,301.7 L1806,301.6 L1812,301.4 L1818,301.2 L1824,301.0 L1830,300.8 L1836,300.6 L1842,300.5 L1848,300.3 L1854,300.1 L1860,299.9 L1866,299.7 L1872,299.5 L1878,299.4 L1884,299.2 L1890,299.0 L1896,298.8 L1893,472 L1500,472 Z" fill="url(#t2)"/>
<path d="M1500,382.0 L1506,380.8 L1512,379.6 L1518,378.5 L1524,377.3 L1530,376.1 L1536,374.9 L1542,373.7 L1548,372.5 L1554,371.3 L1560,370.1 L1566,368.9 L1572,367.6 L1578,366.4 L1584,365.2 L1590,363.9 L1596,362.7 L1602,361.5 L1608,360.3 L1614,359.2 L1620,358.1 L1626,357.1 L1632,356.2 L1638,355.3 L1644,354.6 L1650,354.0 L1656,353.6 L1662,353.3 L1668,353.1 L1674,353.0 L1680,353.1 L1686,353.2 L1692,353.4 L1698,353.6 L1704,353.9 L1710,354.1 L1716,354.4 L1722,354.6 L1728,354.7 L1734,354.8 L1740,354.9 L1746,354.9 L1752,354.9 L1758,354.8 L1764,354.8 L1770,354.7 L1776,354.5 L1782,354.4 L1788,354.3 L1794,354.1 L1800,354.0 L1806,353.9 L1812,353.7 L1818,353.6 L1824,353.4 L1830,353.3 L1836,353.2 L1842,353.0 L1848,352.9 L1854,352.8 L1860,352.6 L1866,352.5 L1872,352.4 L1878,352.3 L1884,352.1 L1890,352.0 L1896,351.9 L1893,472 L1500,472 Z" fill="url(#t3)"/>
<path d="M1500,414.2 L1506,413.8 L1512,413.3 L1518,412.9 L1524,412.5 L1530,412.1 L1536,411.8 L1542,411.5 L1548,411.3 L1554,411.1 L1560,410.9 L1566,410.9 L1572,410.9 L1578,411.0 L1584,411.1 L1590,411.3 L1596,411.5 L1602,411.8 L1608,412.2 L1614,412.6 L1620,413.0 L1626,413.5 L1632,414.0 L1638,414.5 L1644,415.1 L1650,415.7 L1656,416.3 L1662,416.9 L1668,417.6 L1674,418.2 L1680,418.9 L1686,419.5 L1692,420.2 L1698,420.8 L1704,421.4 L1710,422.0 L1716,422.6 L1722,423.2 L1728,423.8 L1734,424.3 L1740,424.9 L1746,425.4 L1752,425.9 L1758,426.5 L1764,427.0 L1770,427.5 L1776,428.0 L1782,428.5 L1788,429.0 L1794,429.5 L1800,430.0 L1806,430.5 L1812,431.0 L1818,431.5 L1824,432.0 L1830,432.5 L1836,433.0 L1842,433.5 L1848,434.0 L1854,434.5 L1860,435.0 L1866,435.5 L1872,436.0 L1878,436.5 L1884,437.0 L1890,437.5 L1896,438.0 L1893,472 L1500,472 Z" fill="url(#t4)"/>
<!--/TWAVES-->
<rect x="1549.5" y="229.1" width="64.8" height="8.4" rx="4.2" fill="#1c2637" stroke="#8a96a0" stroke-opacity="0.35" stroke-width="0.3"/><rect x="1702.5" y="229.1" width="15.2" height="8.4" rx="4.2" fill="#1c2637" stroke="#8a96a0" stroke-opacity="0.35" stroke-width="0.3"/><rect x="1723" y="229.1" width="28.8" height="8.4" rx="4.2" fill="#1c2637" stroke="#8a96a0" stroke-opacity="0.35" stroke-width="0.3"/><rect x="1757.7" y="229.1" width="14.1" height="8.4" rx="4.2" fill="#1c2637" stroke="#8a96a0" stroke-opacity="0.35" stroke-width="0.3"/><rect x="1777.5" y="229.1" width="14.3" height="8.4" rx="4.2" fill="#1c2637" stroke="#8a96a0" stroke-opacity="0.35" stroke-width="0.3"/><rect x="1796.8" y="229.1" width="15.2" height="8.4" rx="4.2" fill="#7e8b90" stroke="#8a96a0" stroke-opacity="0.35" stroke-width="0.3"/><rect x="1816.8" y="229.1" width="26.6" height="8.4" rx="4.2" fill="#1c2637" stroke="#8a96a0" stroke-opacity="0.35" stroke-width="0.3"/><rect x="1849" y="229.1" width="14.9" height="8.4" rx="4.2" fill="#1c2637" stroke="#8a96a0" stroke-opacity="0.35" stroke-width="0.3"/><rect x="1868.4" y="229.1" width="15.2" height="8.4" rx="4.2" fill="#1c2637" stroke="#8a96a0" stroke-opacity="0.35" stroke-width="0.3"/>
<g font-family="Liberation Sans" font-weight="bold" fill="#f0f0f0">
<text x="1553.5" y="235.3" font-size="5.4" letter-spacing="-0.15">Mon 22 Sep, 11:43 AM</text>
<text x="1727" y="235.3" font-size="5.4" letter-spacing="-0.15">ENG - EI</text>
<text x="1826" y="235.3" font-size="5.4" letter-spacing="-0.1">21%</text>
</g>
<g fill="#eaeaea">
<circle cx="1708.2" cy="233.3" r="0.55"/><circle cx="1710.1" cy="233.3" r="0.55"/><circle cx="1712" cy="233.3" r="0.55"/>
<rect x="1764.2" y="230.8" width="0.7" height="5"/>
<path d="M1782,233.5 A4,4 0 0 1 1787.5,233.5 L1786.5,234.3 A2.6,2.6 0 0 0 1783,234.3 Z"/><circle cx="1784.7" cy="235.6" r="0.6"/>
<rect x="1819.6" y="231.5" width="4.5" height="3.5" fill="none" stroke="#eaeaea" stroke-width="0.45"/>
<rect x="1872.3" y="231.7" width="7.5" height="0.6"/><rect x="1872.3" y="234.7" width="7.5" height="0.6"/>
<path d="M1854.5,236 L1855.3,234.6 L1855.3,232.5 A1.6,1.6 0 0 1 1858.5,232.5 L1858.5,234.6 L1859.3,236 Z"/>
</g>
<circle cx="1859.4" cy="231.2" r="1.6" fill="#2a8fb0"/>
<path d="M1802,232 L1803.4,232 L1805,230.8 L1805,235.8 L1803.4,234.6 L1802,234.6 Z" fill="#d8dde0"/><path d="M1806,231.5 Q1807,233.3 1806,235.1 M1807.3,230.8 Q1808.6,233.3 1807.3,235.8" fill="none" stroke="#d8dde0" stroke-width="0.45"/>
<!-- popup -->
<rect x="1744.1" y="239.1" width="120.4" height="152.9" rx="3.2" fill="#fbfbfb"/>
<g font-family="Liberation Sans" fill="#6a6a6a" font-size="4.1">
<text x="1748.6" y="249">Multimedia Volume</text>
<text x="1748.6" y="290">Output devices</text>
<text x="1748.6" y="316.5">Input devices</text>
<text x="1748.6" y="342.3">Media Players</text>
</g>
<g font-family="Liberation Sans" fill="#555" font-size="4">
<text x="1774" y="301">Speakers (Realtek(R) Aud...</text>
<text x="1774" y="326.7">Microphone Array (Realt...</text>
</g>
<g stroke-linecap="round">
<line x1="1773" y1="259.8" x2="1836.6" y2="259.8" stroke="#e4e4e4" stroke-width="0.8"/>
<line x1="1773" y1="259.8" x2="1814.5" y2="259.8" stroke="#4a9aa0" stroke-width="0.9"/>
<line x1="1773" y1="272" x2="1836.6" y2="272" stroke="#e4e4e4" stroke-width="0.8"/>
<line x1="1773" y1="272" x2="1804.3" y2="272" stroke="#4a9aa0" stroke-width="0.9"/>
</g>
<circle cx="1814.5" cy="259.8" r="1.7" fill="#fff" stroke="#4a9aa0" stroke-width="0.6"/>
<circle cx="1804.3" cy="272" r="1.7" fill="#fff" stroke="#4a9aa0" stroke-width="0.6"/>
<g fill="#666">
<path d="M1756,258.6 L1757.2,258.6 L1758.6,257.5 L1758.6,262 L1757.2,261 L1756,261 Z"/>
<rect x="1757" y="270" width="1.6" height="3" rx="0.8"/>
<rect x="1849" y="258" width="3.4" height="0.6"/><rect x="1849" y="259.6" width="3.4" height="0.6"/><rect x="1849" y="261.2" width="3.4" height="0.6"/>
<rect x="1849" y="270.2" width="3.4" height="0.6"/><rect x="1849" y="271.8" width="3.4" height="0.6"/><rect x="1849" y="273.4" width="3.4" height="0.6"/>
<rect x="1849" y="297.8" width="3.4" height="0.55"/><rect x="1849" y="299.3" width="3.4" height="0.55"/><rect x="1849" y="300.8" width="3.4" height="0.55"/>
<rect x="1849" y="323.5" width="3.4" height="0.55"/><rect x="1849" y="325" width="3.4" height="0.55"/><rect x="1849" y="326.5" width="3.4" height="0.55"/>
</g>
<line x1="1748.2" y1="281.4" x2="1860.9" y2="281.4" stroke="#ececec" stroke-width="0.5"/>
<line x1="1748.2" y1="308.6" x2="1860.9" y2="308.6" stroke="#ececec" stroke-width="0.5"/>
<line x1="1748.2" y1="334.5" x2="1860.9" y2="334.5" stroke="#cfcfcf" stroke-width="0.5"/>
<rect x="1748.2" y="295" width="22.5" height="8.9" rx="1" fill="#2a7883"/>
<rect x="1748.2" y="320.9" width="22.5" height="9.1" rx="1" fill="#2a7883"/>
<g fill="#e8f4f5"><rect x="1754" y="297" width="0.6" height="4.5"/><rect x="1763" y="297" width="0.6" height="4.5"/><rect x="1754" y="323" width="0.6" height="4.5"/><rect x="1763" y="323" width="0.6" height="4.5"/></g>
<defs>
<radialGradient id="tmp" cx="0.62" cy="0.5" r="0.55"><stop offset="0" stop-color="#f6f6f6"/><stop offset="0.5" stop-color="#dcdcdc"/><stop offset="1" stop-color="#9c9c9c"/></radialGradient>
</defs>
<rect x="1748.2" y="348.9" width="112.7" height="38.8" rx="3" fill="url(#tmp)"/>
<rect x="1751.4" y="352.3" width="32.2" height="31.8" rx="2" fill="#8a8a8a"/>
<circle cx="1767.3" cy="368.2" r="11.4" fill="#ffffff"/>
<g fill="none" stroke="#333" stroke-width="0.55">
<path d="M1762.5,366.5 L1772,366.5 M1764.3,366.3 L1765.3,363 L1769.3,363 L1770.3,366.3"/>
<circle cx="1765.3" cy="369.8" r="1.5"/><circle cx="1769.3" cy="369.8" r="1.5"/>
</g>
<use href="#edgeIco" transform="translate(1772.5,374.1) scale(0.0107)"/>
<text x="1789.5" y="363.5" font-family="Liberation Sans" font-size="5.6" fill="#222" letter-spacing="-0.05">A site is playing media</text>
<g fill="#222">
<rect x="1798" y="371.8" width="0.5" height="4.2"/><path d="M1802.5,371.8 L1802.5,376 L1798.8,373.9 Z"/>
<path d="M1820.5,371.8 L1820.5,376 L1824.2,373.9 Z"/>
<path d="M1842,371.8 L1842,376 L1845.7,373.9 Z"/><rect x="1846" y="371.8" width="0.5" height="4.2"/>
</g>
</svg>

<!-- dock -->
<div class="dock"></div>
<svg style="position:absolute;left:0;top:990px" width="1918" height="88" viewBox="0 990 1918 88">
<defs>
 <linearGradient id="fold" x1="0" y1="0" x2="0.3" y2="1"><stop offset="0" stop-color="#ffd65c"/><stop offset="1" stop-color="#f4b400"/></linearGradient>
 <linearGradient id="draw" x1="0" y1="0" x2="1" y2="1"><stop offset="0" stop-color="#2c8de0"/><stop offset="1" stop-color="#0a5ab8"/></linearGradient>
 <linearGradient id="edgeA" x1="0" y1="0.2" x2="1" y2="0.7"><stop offset="0" stop-color="#3bbdf5"/><stop offset="0.5" stop-color="#2cc4cf"/><stop offset="1" stop-color="#62e05a"/></linearGradient>
 <linearGradient id="edgeB" x1="0" y1="0" x2="0.3" y2="1"><stop offset="0" stop-color="#1590e2"/><stop offset="1" stop-color="#0a6ad0"/></linearGradient>
 <linearGradient id="canva" x1="0.35" y1="0" x2="0.65" y2="1"><stop offset="0.15" stop-color="#00c2cc"/><stop offset="0.6" stop-color="#3b6fe2"/><stop offset="1" stop-color="#6d1ff2"/></linearGradient>
 <linearGradient id="boltL" x1="0" y1="0" x2="0" y2="1"><stop offset="0" stop-color="#3a6ee0"/><stop offset="0.5" stop-color="#7b3fe0"/><stop offset="1" stop-color="#8a3be0"/></linearGradient>
 <linearGradient id="boltR" x1="0" y1="0" x2="0" y2="1"><stop offset="0" stop-color="#4fd6f0"/><stop offset="1" stop-color="#22c2c8"/></linearGradient>
 <linearGradient id="rmon" x1="0" y1="0" x2="0" y2="1"><stop offset="0" stop-color="#d6f2ff"/><stop offset="1" stop-color="#7dcffc"/></linearGradient>
 <linearGradient id="seel" x1="0" y1="1" x2="1" y2="0"><stop offset="0" stop-color="#2d55d8"/><stop offset="0.5" stop-color="#9b50f2"/><stop offset="1" stop-color="#f0585a"/></linearGradient>
 <linearGradient id="gear" x1="0" y1="0" x2="0" y2="1"><stop offset="0" stop-color="#8b939b"/><stop offset="1" stop-color="#5b636b"/></linearGradient>
 <linearGradient id="mpl" x1="0" y1="0" x2="1" y2="0"><stop offset="0" stop-color="#767676"/><stop offset="0.7" stop-color="#8c8c8c"/><stop offset="1" stop-color="#b0b0b0"/></linearGradient>
 <radialGradient id="mpr" cx="0.42" cy="0.52" r="0.62"><stop offset="0" stop-color="#f4f4f4"/><stop offset="0.45" stop-color="#d8d8d8"/><stop offset="1" stop-color="#8e8e8e"/></radialGradient>
 <clipPath id="mpclip"><rect x="1216" y="1011" width="170" height="50" rx="12"/></clipPath>
</defs>
<rect x="534" y="1011" width="50" height="50" rx="15" fill="#c6eff1" fill-opacity="0.55"/><rect x="605" y="1011" width="50" height="50" rx="15" fill="#c6eff1" fill-opacity="0.55"/><rect x="665" y="1011" width="50" height="50" rx="15" fill="#c6eff1" fill-opacity="0.55"/><rect x="725" y="1011" width="50" height="50" rx="15" fill="#c6eff1" fill-opacity="0.55"/><rect x="785" y="1011" width="50" height="50" rx="15" fill="#c6eff1" fill-opacity="0.55"/><rect x="845" y="1011" width="50" height="50" rx="15" fill="#c6eff1" fill-opacity="0.55"/><rect x="905" y="1011" width="50" height="50" rx="15" fill="#c6eff1" fill-opacity="0.55"/><rect x="965" y="1011" width="50" height="50" rx="15" fill="#c6eff1" fill-opacity="0.55"/><rect x="1025" y="1011" width="50" height="50" rx="15" fill="#c6eff1" fill-opacity="0.55"/><rect x="1085" y="1011" width="50" height="50" rx="15" fill="#c6eff1" fill-opacity="0.55"/><rect x="1145" y="1011" width="50" height="50" rx="15" fill="#c6eff1" fill-opacity="0.55"/>
<line x1="594.5" y1="1011" x2="594.5" y2="1061" stroke="#8a8585" stroke-width="1"/>
<line x1="1205.5" y1="1011" x2="1205.5" y2="1061" stroke="#8a8585" stroke-width="1"/>
<circle cx="630" cy="1066.2" r="2.1" fill="#5d6466"/><circle cx="690" cy="1066.2" r="2.1" fill="#5d6466"/><circle cx="750" cy="1066.2" r="2.1" fill="#5d6466"/><circle cx="810" cy="1066.2" r="2.1" fill="#5d6466"/><circle cx="870" cy="1066.2" r="2.1" fill="#5d6466"/><circle cx="930" cy="1066.2" r="2.1" fill="#5d6466"/><circle cx="990" cy="1066.2" r="2.1" fill="#5d6466"/><circle cx="1050" cy="1066.2" r="2.1" fill="#5d6466"/><circle cx="1110" cy="1066.2" r="2.1" fill="#5d6466"/><circle cx="1170" cy="1066.2" r="2.1" fill="#5d6466"/>
<!-- seelen logo -->
<clipPath id="lc"><circle cx="559.3" cy="1036.2" r="16.2"/></clipPath>
<g clip-path="url(#lc)">
 <path d="M556,1036 Q560,1033.2 566,1033 Q571,1033 575,1035.5 L575,1045 L556,1045 Z" fill="#3f6b71"/>
 <path d="M540,1036 Q546,1033 551.2,1033.4 Q555,1034 561,1037.6 Q565,1039 570,1037.5 Q573,1036.5 578,1036 L578,1060 L540,1060 Z" fill="#2fa4b7"/>
</g>
<circle cx="559.3" cy="1036.2" r="16.9" fill="none" stroke="#0d0d0d" stroke-width="1.9"/>
<!-- folder -->
<path d="M613,1022.5 Q613,1021 614.5,1021 L625,1021 L628,1023.5 L646.5,1023.5 Q648,1023.5 648,1025 L648,1027 L613,1027 Z" fill="#e3a30c"/>
<rect x="613" y="1024.5" width="35" height="26.5" rx="1.2" fill="url(#fold)"/>
<path d="M619.2,1051 L619.2,1043.5 Q619.2,1041 621.7,1041 L639.3,1041 Q641.8,1041 641.8,1043.5 L641.8,1051 Z" fill="url(#draw)"/>
<line x1="623.5" y1="1046" x2="637.5" y2="1046" stroke="#0b3f86" stroke-width="1"/>
<!-- edge -->
<g transform="translate(668,1014) scale(0.04824)"><g id="edgeIco">
 <path d="M120,345 C180,190 320,100 470,100 C670,100 832,250 832,410 C832,520 745,592 645,592 C572,592 520,562 525,522 C530,492 552,470 548,440 C540,385 490,360 440,360 C350,290 220,280 120,345 Z" fill="url(#edgeA)"/>
 <path d="M103,470 C103,355 200,272 330,272 C435,272 515,325 548,415 C500,365 395,385 375,470 C362,560 430,642 530,666 C620,686 722,670 778,648 C712,762 592,832 470,832 C268,832 103,670 103,470 Z" fill="url(#edgeB)"/>
 <path d="M402,382 C330,420 300,500 302,590 C305,700 380,790 490,818 C590,818 700,760 778,648 C722,670 620,686 530,666 C430,642 362,560 375,470 C380,430 390,400 402,382 Z" fill="#0c4e9c"/>
</g></g>
<circle cx="710" cy="1056.1" r="9.4" fill="#ababab"/>
<text x="710" y="1061" font-family="Liberation Sans" font-size="13" font-weight="bold" fill="#fff" text-anchor="middle">6</text>
<!-- canva -->
<circle cx="750.5" cy="1036.3" r="17.5" fill="url(#canva)"/>
<text x="751" y="1040" font-family="Liberation Serif" font-style="italic" font-size="11.5" fill="#fff" stroke="#fff" stroke-width="0.25" text-anchor="middle" letter-spacing="-0.4">Canva</text>
<!-- audacity -->
<defs><clipPath id="audc"><ellipse cx="810.5" cy="1040" rx="9.2" ry="9.5"/></clipPath>
<radialGradient id="audg" cx="0.5" cy="0.5" r="0.5"><stop offset="0" stop-color="#ffe21a"/><stop offset="0.7" stop-color="#ffc020"/><stop offset="1" stop-color="#e8d890" stop-opacity="0.2"/></radialGradient></defs>
<g clip-path="url(#audc)">
<rect x="801" y="1030" width="19" height="20" fill="url(#audg)"/>
<rect x="802.50" y="1038.7" width="1.25" height="4.2" fill="#ff8a00"/><rect x="803.75" y="1037.0" width="1.25" height="7.1" fill="#f5d000"/><rect x="805.00" y="1035.9" width="1.25" height="10.7" fill="#ff8a00"/><rect x="806.25" y="1033.0" width="1.25" height="12.5" fill="#f5d000"/><rect x="807.50" y="1032.6" width="1.25" height="15.1" fill="#ff8a00"/><rect x="808.75" y="1033.8" width="1.25" height="13.8" fill="#f5d000"/><rect x="810.00" y="1033.1" width="1.25" height="14.7" fill="#ff8a00"/><rect x="811.25" y="1032.7" width="1.25" height="15.9" fill="#f5d000"/><rect x="812.50" y="1033.0" width="1.25" height="13.5" fill="#ff8a00"/><rect x="813.75" y="1033.5" width="1.25" height="12.9" fill="#f5d000"/><rect x="815.00" y="1034.9" width="1.25" height="12.4" fill="#ff8a00"/><rect x="816.25" y="1036.6" width="1.25" height="8.5" fill="#f5d000"/><rect x="817.50" y="1037.2" width="1.25" height="8.1" fill="#ff8a00"/><rect x="818.75" y="1040.7" width="1.25" height="2.1" fill="#f5d000"/>
</g>
<path d="M801.5,1041.2 L803,1040.3 L804.5,1041 L806,1039.8 L807.5,1040.6 L809,1039.6 L810.5,1040.2 L812,1039.5 L813.5,1040.4 L815,1039.8 L816.5,1040.5 L818,1040 L819.6,1040.8 L819.6,1043.4 L818,1044 L816.5,1043.2 L815,1043.9 L813.5,1043.2 L812,1044.2 L810.5,1043.4 L809,1044 L807.5,1043.2 L806,1044.1 L804.5,1043.3 L803,1043.9 L801.5,1043.2 Z" fill="#ff1a00"/>
<path d="M798.1,1033.5 A12.35,11.2 0 0 1 822.8,1033.5" fill="none" stroke="#0000e0" stroke-width="2.2"/>
<path d="M799.3,1032.6 L799.3,1049.9 Q796,1049.5 794.2,1046 Q792.8,1042 793.2,1038.5 Q794.2,1034 799.3,1032.6 Z" fill="#0000e0"/>
<path d="M821.9,1032.6 L821.9,1049.9 Q825.2,1049.5 827,1046 Q828.4,1042 828,1038.5 Q827,1034 821.9,1032.6 Z" fill="#0000e0"/>
<rect x="800" y="1032.6" width="1.7" height="17.3" fill="#0000e0"/>
<rect x="819.4" y="1032.6" width="1.7" height="17.3" fill="#0000e0"/>
<!-- bolt -->
<defs>
<linearGradient id="bt1" x1="0" y1="0" x2="0" y2="1"><stop offset="0" stop-color="#1e5ad8"/><stop offset="1" stop-color="#8440de"/></linearGradient>
<linearGradient id="bt2" x1="0" y1="0" x2="0" y2="1"><stop offset="0" stop-color="#2438a8"/><stop offset="1" stop-color="#7c3ce4"/></linearGradient>
<linearGradient id="bt3" x1="0" y1="0" x2="0.3" y2="1"><stop offset="0" stop-color="#4ed6f8"/><stop offset="1" stop-color="#26d0c6"/></linearGradient>
</defs>
<g transform="translate(848,1014) scale(0.04082)">
 <path d="M270,225 Q280,205 300,200 L590,125 L450,525 L610,560 Q380,600 150,650 Q120,650 128,620 Z" fill="url(#bt1)"/>
 <path d="M240,640 L610,556 L515,870 L210,975 Q180,980 188,950 Z" fill="url(#bt2)"/>
 <path d="M590,125 L805,125 Q830,128 822,155 L745,378 L930,395 Q960,400 940,425 L520,870 L610,570 L450,525 Z" fill="url(#bt3)"/>
</g>
<!-- resource monitor -->
<defs><clipPath id="rmc"><rect x="190" y="185" width="945" height="705" rx="45"/></clipPath></defs>
<g transform="translate(906,1016) scale(0.03709)" clip-path="url(#rmc)">
 <rect x="190" y="185" width="945" height="705" fill="#0a60b6"/>
 <path d="M190,480 L305,470 C330,420 360,330 430,300 C480,300 520,400 560,440 C600,470 640,520 680,530 C720,520 760,340 850,300 C900,310 940,420 970,425 L1135,425 L1135,890 L190,890 Z" fill="#1d9ee6"/>
 <path d="M190,660 L335,645 C360,600 390,470 425,460 C470,470 510,610 560,645 C610,665 650,715 690,712 C730,700 790,470 845,460 C880,470 930,590 955,595 L1100,595 L1135,610 L1135,890 L190,890 Z" fill="url(#rmon)"/>
</g>
<!-- slack -->
<circle cx="990.7" cy="1036.3" r="17" fill="#f6f6f6"/>
<circle cx="990.7" cy="1036.3" r="17" fill="none" stroke="#d8dcdc" stroke-width="0.6"/>
<g stroke-linecap="round" stroke-width="4.6">
 <line x1="981" y1="1033.2" x2="987.5" y2="1033.2" stroke="#36c5f0"/>
 <line x1="993.4" y1="1027.2" x2="993.4" y2="1034" stroke="#2eb67d"/>
 <line x1="994.2" y1="1039.5" x2="1000.8" y2="1039.5" stroke="#ecb22e"/>
 <line x1="987.3" y1="1040.2" x2="987.3" y2="1046.8" stroke="#e01e5a"/>
</g>
<circle cx="988.2" cy="1027" r="2.4" fill="#36c5f0"/>
<circle cx="999.6" cy="1033" r="2.4" fill="#2eb67d"/>
<circle cx="993.7" cy="1045.8" r="2.4" fill="#ecb22e"/>
<circle cx="981.2" cy="1039.8" r="2.4" fill="#e01e5a"/>
<!-- seelen ui icon -->
<rect x="1034.3" y="1020" width="32.3" height="32.6" rx="5" fill="url(#seel)" stroke="#0b0b0b" stroke-width="2.6"/>
<line x1="1050.6" y1="1021.5" x2="1050.6" y2="1051.5" stroke="#ffffff" stroke-opacity="0.9" stroke-width="0.9" stroke-dasharray="2 1.6"/>
<line x1="1050.6" y1="1036.3" x2="1066" y2="1036.3" stroke="#ffffff" stroke-opacity="0.9" stroke-width="0.9" stroke-dasharray="2 1.6"/>
<!-- whatsapp -->
<path d="M1096.4,1047.5 A16.2,16.2 0 1 1 1101,1051.6 L1093,1053.8 Z" fill="none" stroke="#1d8c4c" stroke-width="3.1" stroke-linejoin="round"/>
<path d="M1103.5,1027.6 Q1101.5,1029 1102,1032.5 Q1104,1039 1110.5,1043.6 Q1114,1045.8 1117,1044.5 Q1119,1043.3 1118.5,1041.5 L1115,1039.5 Q1113.5,1040.5 1112.5,1041 Q1108.5,1038.5 1106.5,1034.5 Q1107,1033.2 1108,1032.3 L1106.3,1028.2 Q1105,1027 1103.5,1027.6 Z" fill="#1d8c4c"/>
<circle cx="1130.1" cy="1055.8" r="9.4" fill="#ababab"/>
<text x="1130.1" y="1060.6" font-family="Liberation Sans" font-size="13" font-weight="bold" fill="#fff" text-anchor="middle">2</text>
<!-- settings gear -->
<path d="M1182.89,1031.52 L1186.50,1032.95 L1186.50,1039.25 L1182.89,1040.68 Q1180.87,1042.20 1180.56,1044.71 L1181.12,1048.55 L1175.67,1051.70 L1172.63,1049.30 Q1170.30,1048.30 1167.97,1049.30 L1164.93,1051.70 L1159.48,1048.55 L1160.04,1044.71 Q1159.73,1042.20 1157.71,1040.68 L1154.10,1039.25 L1154.10,1032.95 L1157.71,1031.52 Q1159.73,1030.00 1160.04,1027.49 L1159.48,1023.65 L1164.93,1020.50 L1167.97,1022.90 Q1170.30,1023.90 1172.63,1022.90 L1175.67,1020.50 L1181.12,1023.65 L1180.56,1027.49 Q1180.87,1030.00 1182.89,1031.52 Z" fill="url(#gear)" stroke="url(#gear)" stroke-width="1.2" stroke-linejoin="round"/>
<circle cx="1170.3" cy="1036.1" r="8.5" fill="#eceef0"/>
<circle cx="1170.3" cy="1036.1" r="6" fill="#0b55b5"/>
<circle cx="1190" cy="1016.1" r="9.8" fill="#23809a"/>
<path d="M1190.9,1020.9 L1190.9,1011.4 L1190.2,1011.4 Q1188.9,1013 1187.2,1013.6 L1187.2,1015.3 Q1188.4,1015 1189,1014.5 L1189,1020.9 Z" fill="#fff"/>
<!-- media player -->
<g clip-path="url(#mpclip)">
 <rect x="1216" y="1011" width="170" height="50" fill="url(#mpr)"/>
 <rect x="1216" y="1011" width="50" height="50" fill="url(#mpl)"/>
</g>
<circle cx="1240.9" cy="1035.9" r="18" fill="#ffffff"/>
<g fill="none" stroke="#1a1a1a" stroke-width="1.1">
 <path d="M1232.3,1034.5 L1249.5,1034.5"/>
 <path d="M1235.5,1034.3 L1237.5,1027.6 L1244.5,1027.6 L1246.5,1034.3"/>
 <circle cx="1237.3" cy="1040.3" r="2.6"/><circle cx="1244.5" cy="1040.3" r="2.6"/>
 <path d="M1239.9,1040 L1241.9,1040"/>
</g>
<use href="#edgeIco" transform="translate(1249.1,1044.1) scale(0.01783)"/>
<text x="1272.2" y="1029.8" font-family="Liberation Sans" font-size="13.6" fill="#1c1c1c" stroke="#1c1c1c" stroke-width="0.3" letter-spacing="0.62">A site is playin...</text>
<g fill="#1a1a1a">
 <rect x="1284" y="1041.5" width="1.2" height="10"/><path d="M1295,1041.5 L1295,1051.6 L1286.4,1046.5 Z"/>
 <path d="M1323,1041.5 L1323,1052 L1332,1046.7 Z"/>
 <path d="M1358.2,1041.5 L1358.2,1051.6 L1366.8,1046.5 Z"/><rect x="1367.8" y="1041.5" width="1.2" height="10"/>
</g>
</svg>

<!-- MUO logo -->
<svg style="position:absolute;left:1680px;top:930px" width="238" height="148" viewBox="1680 930 238 148">
<defs><filter id="muoSh" x="-10%" y="-10%" width="125%" height="130%"><feDropShadow dx="0.6" dy="1.2" stdDeviation="1.1" flood-color="#1d5a60" flood-opacity="0.6"/></filter></defs>
<g filter="url(#muoSh)">
 <path d="M1737,950 L1883,950 L1883,1004.8 L1846,1040.5 L1700.3,1040.5 L1700.3,986.3 Z" fill="#ab7b73"/>
 <path d="M1857,1040.5 L1883,1015 L1883,1040.5 Z" fill="#ab7b73"/>
</g>
<g fill="none" stroke="#c9eef0" stroke-width="4.9" stroke-linecap="round" stroke-linejoin="round">
 <path d="M1740,1010.3 L1740,978.3 L1756,996.9 L1771.7,978.6"/>
 <path d="M1771.5,988.3 L1771.5,1010.3"/>
 <path d="M1778.9,978.3 L1778.9,1009.4 L1806.5,1009.4 L1806.5,978.3"/>
 <path d="M1814.2,979.8 L1843,979.8 L1843,1009.5 L1814.2,1009.5 Z"/>
</g>
</svg>
</body></html>
